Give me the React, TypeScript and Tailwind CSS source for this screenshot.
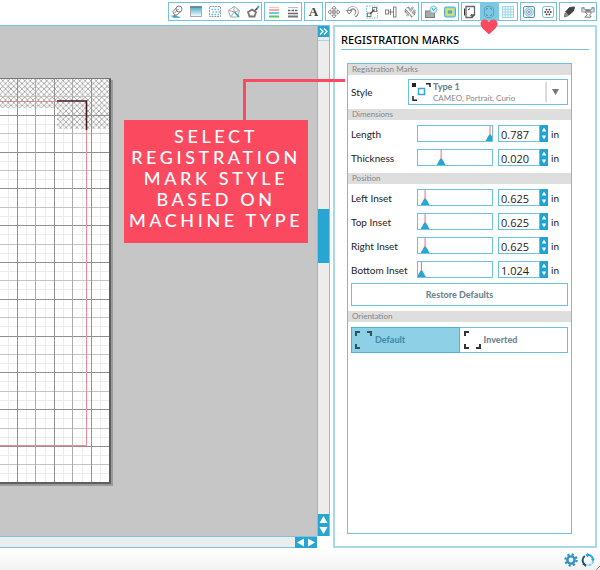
import type { ReactNode } from "react";

const INK = "#808080";
const BLUE = "#27a5d3";

function Glyph({ children }: { children: ReactNode }) {
  return (
    <svg viewBox="0 0 14 14" className="h-3.5 w-3.5 shrink-0" fill="none" stroke={INK} strokeWidth="1" aria-hidden="true">
      {children}
    </svg>
  );
}

type Tool = { name: string; active?: boolean; icon: ReactNode };

const toolGroups: { grow: string; tools: Tool[] }[] = [
  {
    grow: "flex-[5]",
    tools: [
      {
        name: "Fill color",
        icon: (
          <>
            <path d="M3.500 12.500 1.500 11l4-.5 4.500 2z" fill={BLUE} stroke="#5fb9d8" />
            <circle cx="9" cy="4" r="3" />
            <path d="M6.500 2.500 3 6.500a3 3 0 0 0 4 3.300L11.500 6M8.500 4 4 8.500" />
            <path d="M4.500 9.500v2" />
          </>
        ),
      },
      {
        name: "Gradient",
        icon: (
          <>
            <defs>
              <linearGradient id="fade" x1="0" y1="0" x2="0" y2="1">
                <stop offset="0" stopColor="#3aa7c9" />
                <stop offset="1" stopColor="#fff" />
              </linearGradient>
            </defs>
            <rect x="1.500" y="1.500" width="11" height="10" fill="url(#fade)" stroke="#aaa" />
            <path d="M1 2h12" stroke="#6c7f86" strokeWidth="1.500" />
          </>
        ),
      },
      {
        name: "Pattern",
        icon: (
          <>
            <rect x="1.500" y="1.500" width="11" height="10" stroke="#8a9aa2" strokeDasharray="2 .8" />
            <path d="M3.500 4.500h8M3.500 9.500h8M4.500 7h8" stroke="#5fc0e2" strokeWidth="1.500" strokeDasharray="1.500 1.500" />
          </>
        ),
      },
      {
        name: "Sketch",
        icon: (
          <>
            <path d="m7 1.500 5.500 4-2 6.500h-7l-2-6.500zM7 1.500V7l5-1.500M2 5.500 7 7l-3 4.500" stroke="#aaa" />
            <path d="m7.500 7 4.500 5" stroke={BLUE} strokeWidth="1.700" />
          </>
        ),
      },
      {
        name: "Trace",
        icon: (
          <>
            <path d="m6 4.500 4 2.700-1.500 4.300h-5L2 7.200z" stroke="#777" strokeWidth="1.800" />
            <path d="m10.500 4 2.500-3" stroke={BLUE} strokeWidth="1.800" />
            <path d="M9 5.500 11 3.500" stroke="#444" strokeWidth="1.400" />
          </>
        ),
      },
    ],
  },
  {
    grow: "flex-[2]",
    tools: [
      {
        name: "Line color",
        icon: (
          <>
            <path d="M2 2.500h10" stroke="#f3c9a0" />
            <path d="M2 5h10" stroke="#f58a8a" strokeWidth="1.500" />
            <path d="M2 8h10" stroke="#45b5dd" strokeWidth="1.500" />
            <path d="M2 11.500h10" stroke="#4fce54" strokeWidth="2" />
          </>
        ),
      },
      {
        name: "Line style",
        icon: (
          <>
            <path d="M2 2.500h10" stroke="#bbb" />
            <path d="M2 5.500h10" stroke="#666" strokeWidth="1.500" strokeDasharray="2.500 1" />
            <path d="M2 8.500h10" stroke="#666" strokeWidth="1.500" />
            <path d="M2 11.500h10" stroke="#777" strokeWidth="2" />
          </>
        ),
      },
    ],
  },
  { grow: "flex-[1]", tools: [{ name: "Text style", icon: "A" }] },
  {
    grow: "flex-[5]",
    tools: [
      {
        name: "Move",
        icon: (
          <path
            d="M7 1 4.800 3.500h1.400V6h1.600V3.500h1.400zM7 13l-2.200-2.500h1.400V8h1.600v2.500h1.400zM1 7l2.500-2.200v1.400H6v1.600H3.500v1.400zM13 7l-2.500-2.200v1.400H8v1.600h2.500v1.400z"
            strokeWidth=".9"
          />
        ),
      },
      {
        name: "Rotate",
        icon: (
          <>
            <path d="M2.800 5.500a4.300 4.300 0 1 1 6 5.500" strokeWidth="3.400" />
            <path d="M2.800 5.500a4.300 4.300 0 1 1 5.700 5.300" stroke="#fff" strokeWidth="1.700" />
            <path d="M.5 5.500h5.500L3.200 9z" fill="#fff" />
          </>
        ),
      },
      {
        name: "Scale",
        icon: (
          <>
            <rect x="1.500" y="1" width="11" height="12" stroke="#7cc6e0" strokeDasharray="1.500 1" />
            <rect x="7.500" y="2.500" width="4" height="4" />
            <rect x="2.500" y="8" width="3.500" height="3.500" />
            <path d="m5 9 4.500-4.500" stroke="#555" strokeWidth="1.500" />
          </>
        ),
      },
      {
        name: "Align",
        icon: (
          <>
            <rect x="1.500" y="5" width="3" height="4" />
            <rect x="9.500" y="2" width="2.500" height="10" />
            <path d="M6.500 4v6M4.500 7h5" />
          </>
        ),
      },
      {
        name: "Replicate",
        icon: (
          <>
            <path d="M2 7a5 5 0 0 1 4-5M12 7a5 5 0 0 1-4 5" />
            <path d="M6.500 2.500 2.500 8M10 2 4 11M12 5l-4.500 6.500" strokeWidth="2.200" />
            <path d="M6.500 2.500 2.500 8M10 2 4 11M12 5l-4.500 6.500" stroke="#eee" strokeWidth=".8" />
            <path d="m3.500 3 7.500 9" stroke="#fff" strokeWidth="1.200" />
          </>
        ),
      },
    ],
  },
  {
    grow: "flex-[2]",
    tools: [
      {
        name: "Modify",
        icon: (
          <>
            <rect x="1.500" y="6" width="9" height="6.500" fill="#aaa" />
            <circle cx="9.500" cy="4.500" r="3.500" fill="#d9eef5" stroke="#88c4db" />
            <path d="m8 3 1.500 2.500 2-2.500" stroke={BLUE} />
          </>
        ),
      },
      {
        name: "Offset",
        icon: (
          <>
            <rect x="1.500" y="2" width="11" height="10" rx="1.500" fill="#8fd0ea" stroke="#4aaed2" />
            <rect x="4" y="4.500" width="6" height="5" fill="#4aaed2" stroke="#f3e13c" strokeWidth="1.600" />
          </>
        ),
      },
    ],
  },
  {
    grow: "flex-[3]",
    tools: [
      {
        name: "Page setup",
        icon: (
          <>
            <path d="M3 1.500h8.500V10L9 12.500H3z" stroke="#666" strokeWidth="1.300" />
            <path d="M1.500 3.500v7M5 5l2-1.500M9 9l-1.500 2M9 12.500V10h2.500" stroke="#333" />
          </>
        ),
      },
      {
        name: "Registration marks",
        active: true,
        icon: (
          <>
            <path d="M4.500 1.500h5l2 2v7l-2 2h-5l-2-2v-7z" stroke="#5aa3be" />
            <path d="M4.500 5V3.500H6M8 3.500h1.500V5M9.500 9v1.500H8M6 10.500H4.500V9" stroke="#5599b2" />
          </>
        ),
      },
      {
        name: "Grid",
        icon: <path d="M1.500 1.500h11v11h-11zM4.250 1.500v11M7 1.500v11M9.750 1.500v11M1.500 4.250h11M1.500 7h11M1.500 9.750h11" stroke="#9dd5ea" />,
      },
    ],
  },
  {
    grow: "flex-[2]",
    tools: [
      {
        name: "Warp",
        icon: (
          <>
            <rect x="1.500" y="1.500" width="11" height="11" rx="1.500" stroke="#5c93b0" />
            <circle cx="7" cy="7" r="4.200" stroke="#7fb2cc" />
            <circle cx="7" cy="7" r="2.400" stroke="#5c9abb" />
            <circle cx="7" cy="7" r=".6" stroke="#4c88a8" />
          </>
        ),
      },
      {
        name: "Rhinestones",
        icon: (
          <>
            <rect x="1.500" y="1.500" width="11" height="11" rx="2" stroke="#8ab8cc" />
            <g fill="#333" stroke="none">
              <circle cx="5.600" cy="4.600" r=".9" />
              <circle cx="8.400" cy="4.600" r=".9" />
              <circle cx="4.200" cy="7" r=".9" />
              <circle cx="7" cy="7" r=".9" />
              <circle cx="9.800" cy="7" r=".9" />
              <circle cx="5.600" cy="9.400" r=".9" />
              <circle cx="8.400" cy="9.400" r=".9" />
            </g>
          </>
        ),
      },
    ],
  },
  {
    grow: "flex-[2]",
    tools: [
      {
        name: "Cut settings",
        icon: (
          <>
            <path d="m3.500 7 4-4.500 5-.5-1 4-4.500 4z" fill="#444" stroke="#444" />
            <path d="m3 8 3.500 2.500L2.500 12z" fill="#999" stroke="#777" />
          </>
        ),
      },
      {
        name: "Send to machine",
        icon: (
          <>
            <path d="M.8 2.500h2.400v2h7.600v-2h2.400v4.500H.8z" fill="#ddd" stroke="#999" />
            <path d="M4 7h6v1.500L8.500 10l1.800 2M4 7l2.500 2.500L3.800 12.200H10" fill="#fff" stroke="#777" />
            <path d="M4.500 5.700h5" stroke="#666" />
            <path d="M1 3.500h2M11 3.500h2" stroke="#6fc0dc" />
          </>
        ),
      },
    ],
  },
];

function Toolbar() {
  return (
    <header className="flex h-[25px] shrink-0 justify-end bg-white pt-0.5 pr-[3px]">
      <div className="flex h-[19px] w-[429px] gap-0.5" role="toolbar" aria-label="Tools">
        {toolGroups.map((group) => (
          <div key={group.tools[0].name} className={`flex inset-ring inset-ring-[#73c2dd] ${group.grow}`}>
            {group.tools.map((tool) => (
              <button
                key={tool.name}
                type="button"
                aria-label={tool.name}
                className={`relative flex min-w-0 flex-1 items-center justify-center ${tool.active ? "bg-[#7cc8e2]" : ""}`}
              >
                {tool.icon === "A" ? (
                  <span className="font-['Liberation_Serif',serif] text-[13px] leading-none font-bold text-[#444]">A</span>
                ) : (
                  <Glyph>{tool.icon}</Glyph>
                )}
                {tool.active && (
                  <svg viewBox="0 0 18 16" className="absolute top-[17px] left-0 z-20 h-4 w-[18px]" fill="#fb4a60" aria-hidden="true">
                    <path d="M9 15.500C6 12 .5 9 .5 4.700.5 0 7-1 9 3.200 11-1 17.500 0 17.500 4.700 17.500 9 12 12 9 15.500z" />
                  </svg>
                )}
              </button>
            ))}
          </div>
        ))}
      </div>
    </header>
  );
}

const PITCH = 18.4;
const rows = Array.from({ length: 22 }, (_, i) => Math.round(78 + i * PITCH) + 0.5);
const minorRows = Array.from({ length: 22 }, (_, i) => Math.round(87 + i * PITCH) + 0.5);
const columns = Array.from({ length: 5 }, (_, i) => Math.round(17 + i * PITCH) + 0.5);
const minorColumns = Array.from({ length: 6 }, (_, i) => Math.round(8 + i * PITCH) + 0.5);

function Paper() {
  return (
    <svg width="114" height="409" viewBox="0 78 114 409" className="absolute top-[52px] left-0" aria-hidden="true">
      <defs>
        <pattern id="hatch" width="5.500" height="5.500" patternUnits="userSpaceOnUse" patternTransform="translate(0 78)">
          <path d="M0 0l5.500 5.500M5.500 0 0 5.500" stroke="#a8a8a8" strokeWidth=".9" />
        </pattern>
      </defs>
      <rect x="0" y="80" width="113" height="406" fill="#9a9a9a" />
      <rect x="0" y="78" width="111" height="406" fill="#5e5e5e" />
      <rect x="0" y="79" width="109" height="403" fill="#fff" />
      {minorRows.map((y) => (
        <path key={y} d={`M0 ${y}H109`} stroke="#ececec" />
      ))}
      {minorColumns.map((x) => (
        <path key={x} d={`M${x} 79V482`} stroke="#ececec" />
      ))}
      <path d="M0 78h109v51H57v-21H0z" fill="url(#hatch)" />
      {rows.map((y, i) => (
        <path key={y} d={`M0 ${y}H109`} stroke={i % 2 === 0 ? "#909090" : "#c4c4c4"} />
      ))}
      {columns.map((x, i) => (
        <path key={x} d={`M${x} 79V482`} stroke={i % 2 === 0 ? "#929292" : "#acacac"} />
      ))}
      <path d="M0 78.500h111" stroke="#777" />
      <path d="M0 101.500h57" stroke="#e08c8f" />
      <path d="M86.500 130v315.500H0" fill="none" stroke="#f28b93" />
      <path d="M57 101h29.500v29" fill="none" stroke="#451a20" strokeWidth="1.600" />
    </svg>
  );
}

function ScrollArrow({ label, path }: { label: string; path: string }) {
  return (
    <button type="button" aria-label={label} className="flex h-[11px] w-[11px] items-center justify-center bg-[#27a5d3]">
      <svg viewBox="0 0 11 11" className="h-[11px] w-[11px]" fill="#fff" aria-hidden="true">
        <path d={path} />
      </svg>
    </button>
  );
}

function Workspace() {
  return (
    <section aria-label="Design area" className="flex min-w-0 flex-1 flex-col border-t border-[#7cc4dd]">
      <div className="flex min-h-0 flex-1">
        <div className="relative min-w-0 flex-1 bg-[#c6c6c6]">
          <Paper />
          <p className="absolute top-[94px] right-[9px] z-10 w-[184px] bg-[#fb4a60] pt-1.5 pb-3 text-center text-lg leading-[21px] font-medium tracking-[0.2em] text-white">
            SELECT
            <br />
            REGISTRATION
            <br />
            MARK STYLE
            <br />
            BASED ON
            <br />
            MACHINE TYPE
          </p>
          <div className="absolute top-[53px] -right-7 z-10 h-11 w-[102px] border-t-3 border-l-3 border-[#fb4a60]" />
        </div>
        <div className="flex w-[13px] flex-col border-x border-[#7cc4dd] bg-[#ececec]">
          <button type="button" aria-label="Collapse panel" className="flex h-[11px] items-center justify-center bg-[#27a5d3]">
            <svg viewBox="0 0 11 11" className="h-[11px] w-[11px]" fill="none" stroke="#fff" strokeWidth="1.400" aria-hidden="true">
              <path d="m2 2.500 3 3-3 3M6 2.500l3 3-3 3" />
            </svg>
          </button>
          <div className="mt-[3px] flex flex-1 flex-col border-t border-[#a9d5e4]">
            <div className="flex-[168]" />
            <div className="h-[54px] bg-[#27a5d3]" />
            <div className="flex-[250]" />
          </div>
          <ScrollArrow label="Scroll up" path="M5.500 2 9.500 9h-8z" />
          <ScrollArrow label="Scroll down" path="M5.500 9 9.500 2h-8z" />
        </div>
      </div>
      <div className="mr-[13px] flex h-3 justify-end border-y border-[#7cc4dd] bg-[#ececec]">
        <ScrollArrow label="Scroll left" path="M2 5.500 9 1.500v8z" />
        <ScrollArrow label="Scroll right" path="M9 5.500 2 1.500v8z" />
      </div>
    </section>
  );
}

function SectionTitle({ children }: { children: ReactNode }) {
  return <h2 className="h-[11px] bg-[#dedede] pl-1 text-[8px] leading-[11px] text-[#858585]">{children}</h2>;
}

function SettingRow({ id, label, value, position }: { id: string; label: string; value: string; position: number }) {
  return (
    <div className="flex h-[17px] items-center">
      <label htmlFor={id} className="w-[66px] shrink-0 text-[10px] leading-none text-[#222]">
        {label}
      </label>
      <div className="h-[17px] min-w-0 flex-1 overflow-hidden border border-[#6cc1dc]">
        <input
          type="range"
          aria-label={`${label} slider`}
          defaultValue={position}
          className="-ml-1 block h-[15px] w-[calc(100%+8px)] appearance-none bg-transparent [&::-webkit-slider-thumb]:h-[15px] [&::-webkit-slider-thumb]:w-[9px] [&::-webkit-slider-thumb]:appearance-none [&::-webkit-slider-thumb]:bg-[linear-gradient(#f4686f_9px,#27a5d3_9px)] [&::-webkit-slider-thumb]:[clip-path:polygon(4px_0,5px_0,5px_8px,9px_15px,0_15px,4px_8px)]"
        />
      </div>
      <input
        id={id}
        type="text"
        defaultValue={value}
        className="ml-[5px] h-[17px] w-[42px] border border-[#6cc1dc] bg-white pt-0.5 pl-0.5 font-['Open_Sans','Noto_Sans',sans-serif] text-[11px] leading-[14px] text-[#222] outline-none"
      />
      <div className="flex h-[17px] w-2 flex-col bg-[#1fa3d5]">
        <button type="button" aria-label={`Increase ${label}`} className="flex flex-1 items-center justify-center">
          <svg viewBox="0 0 6 5" className="h-[5px] w-1.5" fill="#fff" aria-hidden="true">
            <path d="M3 .5 5.200 4.500H.8z" />
          </svg>
        </button>
        <button type="button" aria-label={`Decrease ${label}`} className="flex flex-1 items-center justify-center">
          <svg viewBox="0 0 6 5" className="h-[5px] w-1.5" fill="#fff" aria-hidden="true">
            <path d="M3 4.500 5.200.5H.8z" />
          </svg>
        </button>
      </div>
      <span className="w-5 shrink-0 pl-[3px] text-[10px] leading-none text-[#222]">in</span>
    </div>
  );
}

function RegistrationPanel() {
  return (
    <aside className="flex w-[264px] shrink-0 flex-col border-2 border-[#a9d9e8] bg-white px-1.5 pb-3">
      <h1 className="h-[23px] border-b border-[#7cc4dd] font-['Noto_Sans','Open_Sans',sans-serif] text-[11px] leading-[25px] font-medium text-black">REGISTRATION MARKS</h1>
      <div className="mt-[13px] mr-[17px] ml-1.5 flex-1 border border-[#6cc1dc]">
        <SectionTitle>Registration Marks</SectionTitle>
        <div className="flex h-[34px] items-center px-[3px] pb-px">
          <label htmlFor="mark-style" className="w-[57px] shrink-0 text-[10px] leading-none text-[#222]">
            Style
          </label>
          <div className="relative h-[26px] min-w-0 flex-1 border border-[#6cc1dc]">
            <select
              id="mark-style"
              className="block h-3.5 w-full appearance-none bg-transparent pl-6 text-[9px] leading-[14px] font-black text-[#6f8794] outline-none"
            >
              <option>Type 1</option>
            </select>
            <span className="pointer-events-none block pl-6 text-[8px] leading-2 text-[#888]">CAMEO, Portrait, Curio</span>
            <svg viewBox="0 0 20 20" className="pointer-events-none absolute top-0.5 left-[3px] h-5 w-5" fill="none" aria-hidden="true">
              <path d="M0 1h4v4H0z" fill="#222" />
              <path d="M14 1.700h4V5M1 14v4.300h4" stroke="#222" strokeWidth="1.500" />
              <path d="M6.500 6.500h6v6h-6z" stroke="#36a9d2" strokeWidth="1.500" />
            </svg>
            <div className="pointer-events-none absolute inset-y-0.5 right-5 w-0.5 bg-[#dcdcdc]" />
            <svg viewBox="0 0 7 6" className="pointer-events-none absolute top-[9px] right-2 h-1.5 w-[7px]" fill="#777" aria-hidden="true">
              <path d="M0 0h7L3.500 6z" />
            </svg>
          </div>
        </div>
        <SectionTitle>Dimensions</SectionTitle>
        <div className="flex flex-col gap-[7px] px-[3px] pt-[5px] pb-[7px]">
          <SettingRow id="length" label="Length" value="0.787" position={98} />
          <SettingRow id="thickness" label="Thickness" value="0.020" position={31} />
        </div>
        <SectionTitle>Position</SectionTitle>
        <div className="flex flex-col gap-[7px] px-[3px] py-[5px]">
          <SettingRow id="left" label="Left Inset" value="0.625" position={9} />
          <SettingRow id="top" label="Top Inset" value="0.625" position={9} />
          <SettingRow id="right" label="Right Inset" value="0.625" position={9} />
          <SettingRow id="bottom" label="Bottom Inset" value="1.024" position={4} />
        </div>
        <div className="px-[3px] pb-[5px]">
          <button type="button" className="block h-[23px] w-full border border-[#6cc1dc] text-[9px] font-black text-[#6f8794]">
            Restore Defaults
          </button>
        </div>
        <SectionTitle>Orientation</SectionTitle>
        <div className="flex px-[3px] pt-[5px]">
          <button type="button" aria-pressed="true" className="flex h-[26px] flex-1 items-center gap-[3px] border border-[#4db3d5] bg-[#8ed0e6] pl-[3px] text-[9px] font-black text-[#438faa]">
            <svg viewBox="0 0 17 18" className="h-[18px] w-[17px]" fill="none" stroke="#33515d" strokeWidth="2" aria-hidden="true">
              <path d="M1 5V1h4M12 1h4v4M1 13v4h4" />
            </svg>
            Default
          </button>
          <button type="button" aria-pressed="false" className="flex h-[26px] flex-1 items-center gap-[3px] border border-l-0 border-[#6cc1dc] pl-1 text-[9px] font-black text-[#6f8794]">
            <svg viewBox="0 0 17 18" className="h-[18px] w-[17px]" fill="none" stroke="#333" strokeWidth="2" aria-hidden="true">
              <path d="M1 5V1h4M16 13v4h-4M1 13v4h4" />
            </svg>
            Inverted
          </button>
        </div>
      </div>
    </aside>
  );
}

function StatusBar() {
  return (
    <footer className="relative flex h-[22px] shrink-0 items-start justify-end gap-[3px] bg-linear-to-b from-white to-[#f2f2f2] pt-[5px] pr-[5px]">
      <button type="button" aria-label="Preferences">
        <svg viewBox="0 0 14 14" className="block h-3.5 w-3.5" fill="none" stroke="#2f93c8" aria-hidden="true">
          <circle cx="7" cy="7" r="3.600" strokeWidth="2.400" />
          <circle cx="7" cy="7" r="5.600" strokeWidth="2.200" strokeDasharray="2.200 2.200" />
        </svg>
      </button>
      <button type="button" aria-label="Sync">
        <svg viewBox="0 0 14 14" className="block h-3.5 w-3.5" fill="none" strokeWidth="2" aria-hidden="true">
          <path d="M5 2.200a5.200 5.200 0 0 1 7 4" stroke="#27a5d3" />
          <path d="M12.200 8a5.200 5.200 0 0 1-7 4" stroke="#8fd0e4" strokeDasharray="3 .8" />
          <path d="M3.800 11.500a5.200 5.200 0 0 1 0-8.500" stroke="#1a5670" />
          <path d="m6 0 3 2-3 2.500zM13.800 5.500l-1.500 3-2.500-2z" fill="#27a5d3" />
          <path d="M1 11h4v3z" fill="#1a5670" />
        </svg>
      </button>
      <svg viewBox="0 0 4 4" className="absolute right-0 bottom-0 h-1 w-1" stroke="#888" aria-hidden="true">
        <path d="M0 4 4 0" />
      </svg>
    </footer>
  );
}

export default function App() {
  return (
    <div className="flex h-screen flex-col overflow-hidden bg-white font-['Lato','Open_Sans',sans-serif]">
      <Toolbar />
      <main className="flex min-h-0 flex-1 gap-[3px] pr-[3px]">
        <Workspace />
        <RegistrationPanel />
      </main>
      <StatusBar />
    </div>
  );
}
